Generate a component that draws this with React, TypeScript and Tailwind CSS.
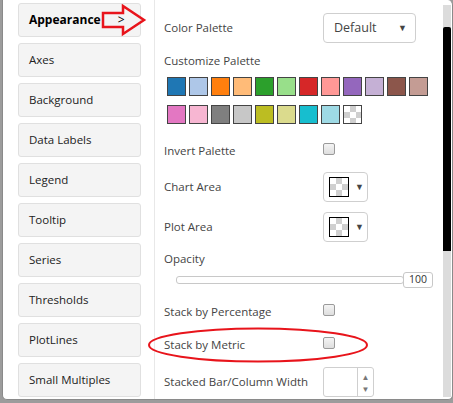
const sidebarItems = [
  'Appearance',
  'Axes',
  'Background',
  'Data Labels',
  'Legend',
  'Tooltip',
  'Series',
  'Thresholds',
  'PlotLines',
  'Small Multiples',
]

const palette = [
  '#1f77b4', '#aec7e8', '#ff7f0e', '#ffbb78', '#2ca02c', '#98df8a',
  '#d62728', '#ff9896', '#9467bd', '#c5b0d5', '#8c564b', '#c49c94',
  '#e377c2', '#f7b6d2', '#7f7f7f', '#c7c7c7', '#bcbd22', '#dbdb8d',
  '#17becf', '#9edae5',
]

const checker =
  'bg-white bg-[conic-gradient(#cfcfcf_25%,#ffffff_0_50%,#cfcfcf_0_75%,#ffffff_0)] bg-[length:12px_12px]'

const Checkbox = () => (
  <div className="mb-[5px] h-[12px] w-[12px] rounded-[2px] border border-[#9a9a9a] bg-gradient-to-b from-[#f4f4f4] to-[#dedede]" />
)

const ColorPicker = () => (
  <div className="flex h-[30px] w-[45px] items-center rounded-[4px] border border-[#cfcfcf] bg-white pl-[5px]">
    <div className={`h-[20px] w-[20px] border border-black ${checker}`} />
    <span className="ml-[6px] text-[9px] text-[#444]">▼</span>
  </div>
)

const Row = ({ label, className, children }: { label: string; className: string; children?: React.ReactNode }) => (
  <div className={`flex items-center ${className}`}>
    <div className="w-[159px] text-[#444]">{label}</div>
    {children}
  </div>
)

export default function App() {
  return (
    <div
      className="relative h-[403px] w-[453px] overflow-hidden bg-[#9c9c9c] text-[11.5px]"
      style={{ fontFamily: '"Open Sans", "Noto Sans", sans-serif' }}
    >
      <div className="ml-[2px] flex h-[400px] w-[451px] rounded-b-[5px] rounded-tr-[5px] border border-t-0 border-[#8a8a8a] bg-white">
        <nav className="flex w-[152px] shrink-0 flex-col gap-[6px] border-r border-[#e8e8e8] pl-[15px] pt-[3px]">
          {sidebarItems.map((item, i) => (
            <div
              key={item}
              className={`flex h-[34px] w-[123px] items-center rounded-[3px] border border-[#e0e0e0] bg-[#f4f4f4] pl-[10px] ${
                i === 0 ? 'font-bold text-[12px] text-black' : 'text-[#222]'
              }`}
            >
              {item}
              {i === 0 ? <span className="ml-[17px] font-normal">&gt;</span> : null}
            </div>
          ))}
        </nav>

        <div className="flex flex-1 flex-col pl-[9px]">
          <Row label="Color Palette" className="mt-[13px] h-[30px]">
            <div className="flex h-[30px] w-[93px] items-center justify-between rounded-[4px] border border-[#cfcfcf] pl-[10px] pr-[8px] text-[12.5px] text-[#444]">
              <span>Default</span>
              <span className="text-[9px]">▼</span>
            </div>
          </Row>

          <div className="mt-[10px] flex h-[16px] items-center text-[#444]">Customize Palette</div>

          <div className="mt-[8px] grid w-[262px] grid-cols-[repeat(12,19px)] gap-x-[3px] gap-y-[9px] pl-[3px]">
            {palette.map((c) => (
              <div key={c} className="h-[19px] w-[19px] border border-[#444]" style={{ backgroundColor: c }} />
            ))}
            <div className={`h-[19px] w-[19px] border border-[#444] ${checker}`} />
          </div>

          <Row label="Invert Palette" className="mt-[19px] h-[16px]">
            <Checkbox />
          </Row>

          <Row label="Chart Area" className="mt-[13px] h-[30px]">
            <ColorPicker />
          </Row>

          <Row label="Plot Area" className="mt-[10px] h-[30px]">
            <ColorPicker />
          </Row>

          <div className="mt-[9px] flex h-[16px] items-center text-[#444]">Opacity</div>

          <div className="mt-[5px] flex h-[16px] items-center pl-[12px]">
            <div className="h-[8px] w-[228px] rounded-[3px] border border-[#c8c8c8] bg-white" />
            <div className="-ml-px flex h-[16px] w-[30px] items-center justify-center rounded-[3px] border border-[#c8c8c8] bg-white text-[10.5px] text-[#333]">
              100
            </div>
          </div>

          <Row label="Stack by Percentage" className="mt-[16px] h-[16px]">
            <Checkbox />
          </Row>

          <Row label="Stack by Metric" className="mt-[17px] h-[16px]">
            <Checkbox />
          </Row>

          <Row label="Stacked Bar/Column Width" className="mt-[14px] h-[30px]">
            <div className="flex h-[30px] w-[51px] rounded-[3px] border border-[#cfcfcf] bg-white">
              <div className="w-[34px] border-r border-[#cfcfcf]" />
              <div className="flex flex-1 flex-col items-center justify-center gap-[3px] text-[8px] leading-[9px] text-[#777]">
                <span>▲</span>
                <span>▼</span>
              </div>
            </div>
          </Row>
        </div>

        <div className="mb-[2px] mr-[1px] mt-[5px] flex w-[8px] shrink-0 flex-col bg-[#dcdcdc]">
          <div className="h-[22px]" />
          <div className="h-[224px] rounded-t-[2px] bg-black" />
        </div>
      </div>

      <svg className="absolute left-[100px] top-[4px]" width="48" height="34" viewBox="0 0 48 34">
        <path d="M3 9 H23 V2 L44 16 L23 30 V23 H3 Z" fill="none" stroke="#e8141b" strokeWidth="2.5" />
      </svg>

      <svg className="absolute left-[146px] top-[326px]" width="224" height="38" viewBox="0 0 224 38">
        <ellipse cx="112" cy="19" rx="109" ry="16.5" fill="none" stroke="#e8141b" strokeWidth="2" />
      </svg>
    </div>
  )
}
